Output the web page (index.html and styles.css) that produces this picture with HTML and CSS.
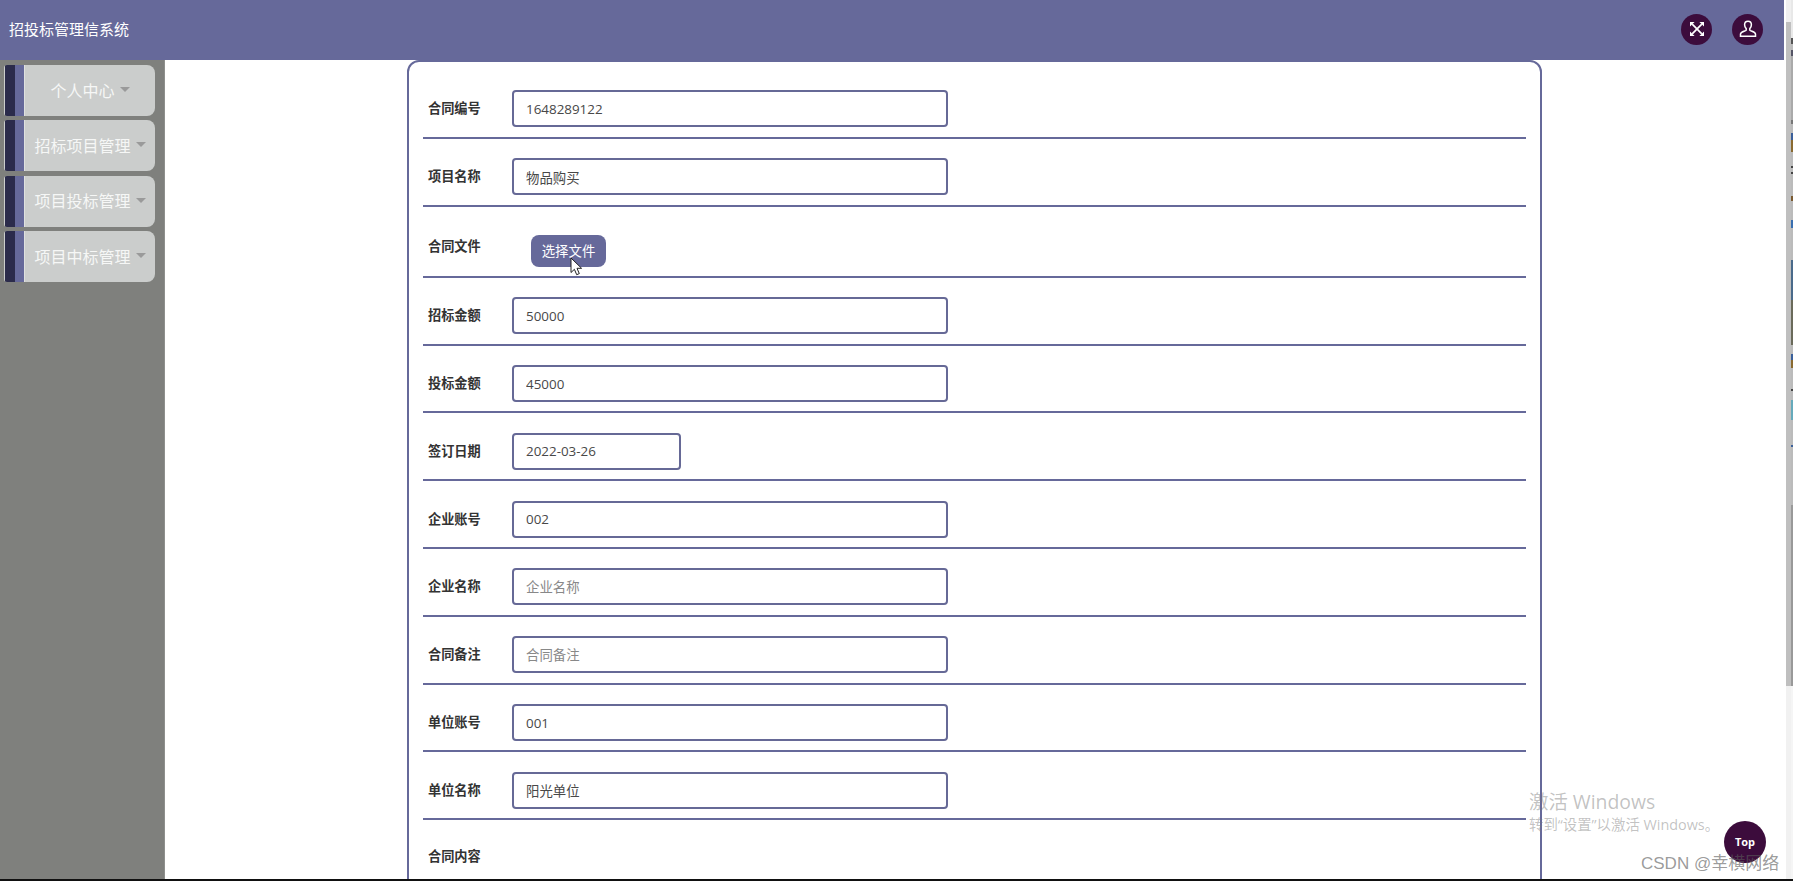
FILE: index.html
```html
<!DOCTYPE html>
<html lang="zh-CN">
<head>
<meta charset="utf-8">
<title>招投标管理信系统</title>
<link rel="stylesheet" href="styles.css">
</head>
<body>
<div class="app">
  <header class="topbar">
    <div class="brand">招投标管理信系统</div>
    <div class="top-actions">
      <span class="round-btn">
        <svg viewBox="0 0 16 16" width="16" height="16" fill="none" stroke="#fff">
          <path d="M3.2 3.2 12.8 12.8M12.8 3.2 3.2 12.8" stroke-width="1.7"/>
          <path d="M1 5.6V1H5.6ZM15 5.6V1H10.4ZM1 10.4V15H5.6ZM15 10.4V15H10.4Z" fill="#fff" stroke="none"/>
        </svg>
      </span>
      <span class="round-btn">
        <svg viewBox="0 0 18 18" width="18" height="18" fill="none" stroke="#fff" stroke-width="1.5">
          <path d="M9 1.2c2.1 0 3.4 1.6 3.4 3.6 0 1.6-.7 3-1.6 3.8v1.6c0 .7 5.7 1.4 5.7 3.9v2.1H1.5v-2.1c0-2.5 5.7-3.2 5.7-3.9V8.6c-.9-.8-1.6-2.2-1.6-3.8 0-2 1.3-3.6 3.4-3.6Z"/>
        </svg>
      </span>
    </div>
  </header>
  <div class="body-row">
    <nav class="sidebar">
      <a class="menu-item"><i class="stripe-dark"></i><i class="stripe-mid"></i><span class="menu-label">个人中心<b class="caret"></b></span></a>
      <a class="menu-item"><i class="stripe-dark"></i><i class="stripe-mid"></i><span class="menu-label">招标项目管理<b class="caret"></b></span></a>
      <a class="menu-item"><i class="stripe-dark"></i><i class="stripe-mid"></i><span class="menu-label">项目投标管理<b class="caret"></b></span></a>
      <a class="menu-item"><i class="stripe-dark"></i><i class="stripe-mid"></i><span class="menu-label">项目中标管理<b class="caret"></b></span></a>
    </nav>
    <main class="main">
      <form class="card">
        <div class="row"><label class="row-label">合同编号</label><input class="field" value="1648289122"></div>
        <div class="row"><label class="row-label">项目名称</label><input class="field" value="物品购买"></div>
        <div class="row row-file"><label class="row-label">合同文件</label><span class="file-btn">选择文件</span></div>
        <div class="row"><label class="row-label">招标金额</label><input class="field" value="50000"></div>
        <div class="row"><label class="row-label">投标金额</label><input class="field" value="45000"></div>
        <div class="row"><label class="row-label">签订日期</label><input class="field field-date" value="2022-03-26"></div>
        <div class="row"><label class="row-label">企业账号</label><input class="field" value="002"></div>
        <div class="row"><label class="row-label">企业名称</label><input class="field" placeholder="企业名称"></div>
        <div class="row"><label class="row-label">合同备注</label><input class="field" placeholder="合同备注"></div>
        <div class="row"><label class="row-label">单位账号</label><input class="field" value="001"></div>
        <div class="row"><label class="row-label">单位名称</label><input class="field" value="阳光单位"></div>
        <div class="row row-last"><label class="row-label">合同内容</label></div>
      </form>
    </main>
  </div>
</div>
<div class="edge"><div class="edge-bar"></div><div class="edge-peek"></div></div>
<div class="bottom-rule"></div>

<svg class="pointer" viewBox="0 0 12 19" width="12" height="19">
  <path d="M1 1v14.5l3.4-3.2 2.3 5.4 2.6-1.1-2.3-5.3h4.6Z" fill="#fff" stroke="#222" stroke-width="1"/>
</svg>
<div class="activate">
  <div class="activate-title">激活 Windows</div>
  <div class="activate-sub">转到“设置”以激活 Windows。</div>
</div>
<a class="to-top">Top</a>
<div class="csdn">CSDN @幸横网络</div>
</body>
</html>
```
FILE: styles.css
```css
* { box-sizing: border-box; }
html, body { height: 100%; margin: 0; }
body {
  display: flex;
  height: 881px;
  overflow: hidden;
  background: #fff;
  font-family: "Noto Sans CJK SC", "Open Sans", sans-serif;
}
.app { width: 1784px; height: 881px; display: flex; flex-direction: column; }
.topbar {
  height: 60px;
  flex: none;
  background: #66699a;
  display: flex;
  align-items: center;
  justify-content: space-between;
  padding: 0 21px 2px 9px;
  position: relative;
  z-index: 1;
}
.brand { color: #fff; font-size: 15px; margin-bottom: 2px; }
.top-actions { display: flex; gap: 20px; }
.round-btn {
  width: 31px; height: 31px;
  border-radius: 50%;
  background: #3c0c3c;
  display: flex; align-items: center; justify-content: center;
}
.body-row { flex: 1; display: flex; min-height: 0; }
.sidebar {
  width: 165px; flex: none;
  background: #7f807d;
  padding: 5px 9px 0 4px;
  display: flex; flex-direction: column; gap: 4.4px;
  border-right: 1px solid #8f908d;
}
.menu-item {
  height: 51px;
  display: flex;
  background: #cbcdcc;
  border-radius: 3px 8px 8px 3px;
  overflow: hidden;
}
.stripe-dark { width: 10px; margin-left: 1px; background: #2b2b4b; flex: none; }
.stripe-mid { width: 10px; background: #66699a; border-right: 1px solid #dfe1df; flex: none; }
.menu-label {
  flex: 1;
  display: flex; align-items: center; justify-content: center; gap: 5px;
  padding-bottom: 2px;
  color: #f6f7f6;
  font-size: 16px;
}
.caret {
  width: 0; height: 0;
  border-left: 5px solid transparent;
  border-right: 5px solid transparent;
  border-top: 5px solid #9a9a9a;
}
.main { flex: 1; padding-left: 242px; min-width: 0; overflow: hidden; }
.card {
  width: 1135px;
  height: 860px;
  border: 2px solid #66699a;
  border-radius: 12px;
  padding: 8.8px 14px 0;
  background: #fff;
}
.row {
  height: 67.8px;
  padding: 10px 0 0 5px;
  display: flex;
  align-items: center;
  border-bottom: 2px solid #66699a;
}
.row:first-child { height: 68.3px; }
.row-file { height: 71px; }
.row-last { border-bottom: 0; padding-top: 5px; }
.row-label {
  width: 84px; flex: none;
  margin-top: -2px;
  color: #333;
  font-size: 13.2px;
  font-weight: 700;
}
.field {
  width: 436px; height: 37px;
  border: 2px solid #666996;
  border-radius: 4px;
  padding: 0 12px;
  color: #484848;
  background: #fff;
  font-family: "Open Sans", "Noto Sans CJK SC", sans-serif;
  font-size: 13.4px;
  outline: 0;
}
.field::placeholder { color: #888; opacity: 1; }
.field-date { width: 169px; }
.file-btn {
  margin: 9px 0 0 19px;
  width: 75px; height: 32px;
  padding-bottom: 2px;
  border-radius: 8px;
  background: #66699a;
  color: #fff;
  font-size: 13.4px;
  display: flex; align-items: center; justify-content: center;
}
.edge {
  position: relative;
  width: 9px; height: 881px;
  flex: none;
  background: #fff;
}
.edge-bar {
  position: absolute; left: 2px; top: 0; bottom: 0; width: 5px;
  background: linear-gradient(#f0f0f0 0 22px, #bfbfbf 22px 686px, #f1f1f1 686px);
}
.edge-peek {
  position: absolute; left: 7px; top: 0; bottom: 0; width: 2px;
  background: linear-gradient(
    #e8e8e8 0 38px, #555 38px 44px, #bbb 44px 50px, #556 50px 56px, #aaa 56px 120px,
    #777 120px 124px, #bbb 124px 133px, #3a5f9a 133px 140px, #8a6a30 140px 152px, #bbb 152px 166px,
    #444 166px 168px, #bbb 168px 172px, #444 172px 174px, #bbb 174px 196px, #7a5a30 196px 201px,
    #bbb 201px 220px, #3a6fb0 220px 228px, #bbb 228px 260px, #4a6a8a 260px 300px, #6a6a5a 300px 345px,
    #bbb 345px 354px, #3a5f9a 354px 360px, #8a6a30 360px 368px, #bbb 368px 389px, #444 389px 391px,
    #bbb 391px 400px, #6ab 400px 420px, #bbb 420px 445px, #3a5f9a 445px 447px, #bbb 447px 505px,
    #999 505px 686px, #f5f5f5 686px
  );
}
.bottom-rule {
  position: absolute; left: 0; right: 0; bottom: 0; height: 2px;
  background: #111;
}
.pointer { position: absolute; left: 570px; top: 257px; }
.activate {
  position: absolute; left: 1529px; top: 788px;
  color: rgba(120, 120, 120, .45);
  pointer-events: none;
}
.activate-title { font-size: 19.4px; line-height: 27px; font-family: "Open Sans", "Noto Sans CJK SC", sans-serif; }
.activate-sub { font-size: 14.4px; line-height: 20px; font-family: "Open Sans", "Noto Sans CJK SC", sans-serif; }
.to-top {
  position: absolute; left: 1724px; top: 821px;
  width: 42px; height: 42px;
  padding-bottom: 2px;
  border-radius: 50%;
  background: #3c0c3c;
  color: #fff;
  font-family: "Open Sans", sans-serif;
  font-size: 11px; font-weight: 700;
  display: flex; align-items: center; justify-content: center;
}
.csdn {
  position: absolute; left: 1641px; top: 852px;
  color: rgba(90, 90, 90, .62);
  font-family: "Liberation Sans", "Noto Sans CJK SC", sans-serif;
  font-size: 17px; line-height: 24px;
  white-space: nowrap;
}
```
